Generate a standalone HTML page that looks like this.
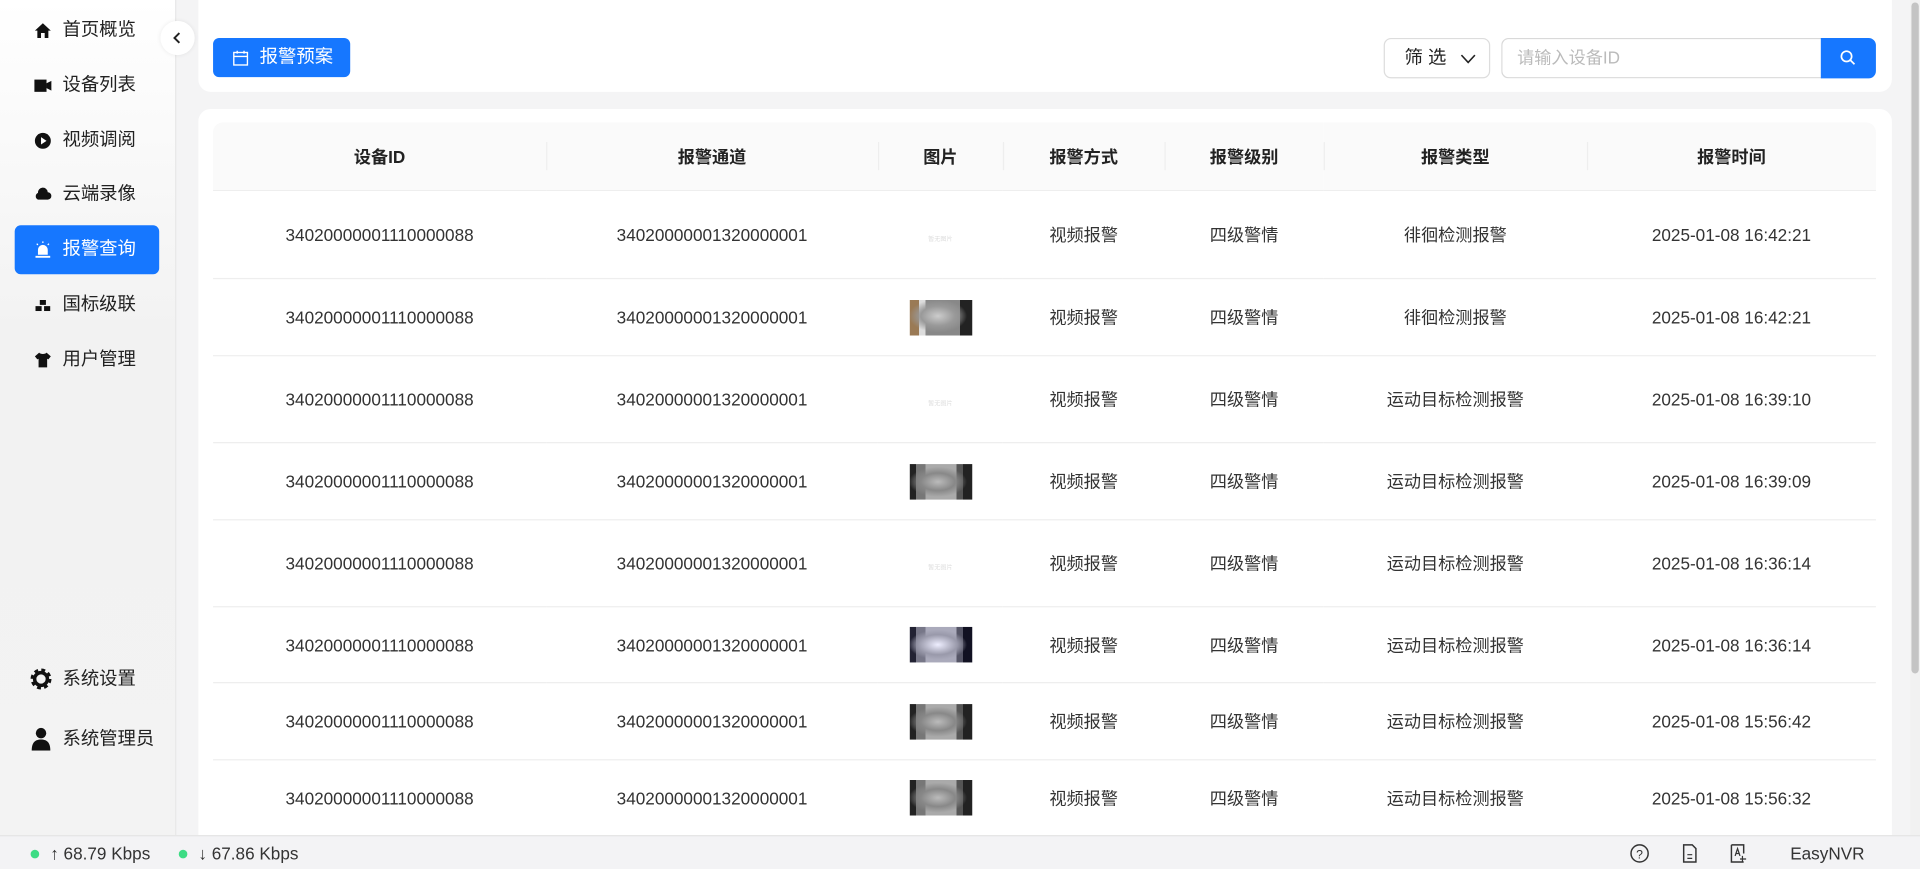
<!DOCTYPE html>
<html><head><meta charset="utf-8"><style>
html,body{margin:0;padding:0;width:1920px;height:869px;overflow:hidden;background:#f4f4f5;}
#w{position:absolute;left:0;top:0;width:1568px;height:710px;overflow:hidden;transform:scale(1.22449);transform-origin:0 0;font-family:"Liberation Sans","Noto Sans CJK SC",sans-serif;color:#222;background:#f4f4f5;}
.side{position:absolute;left:0;top:0;width:143px;height:682px;background:linear-gradient(#fff,#f2f2f2 40%,#f3f3f3);border-right:1px solid #e8e8e8;}
.mi{position:absolute;left:12px;width:118px;height:40px;font-size:15px;line-height:40px;}
.mi .ic{position:absolute;left:16px;top:13px;width:14px;height:14px;}
.mi span{position:absolute;left:39px;}
.act{background:#1677ff;color:#fff;border-radius:5px;}
.col{position:absolute;left:131px;top:17px;width:28px;height:28px;border-radius:50%;background:#fff;box-shadow:0 0 4px rgba(0,0,0,.08);}
.card{position:absolute;left:162px;width:1383px;background:#fff;border-radius:10px;}
.btn{position:absolute;left:174px;top:31px;width:112px;height:32px;background:#1677ff;border-radius:5px;color:#fff;font-size:15px;line-height:32px;}
.sel{position:absolute;left:1130px;top:31px;width:87px;height:33px;border:1px solid #ddd;border-radius:6px;box-sizing:border-box;font-size:15px;line-height:31px;}
.inp{position:absolute;left:1226px;top:31px;width:262px;height:33px;border:1px solid #d9d9d9;border-right:none;border-radius:6px 0 0 6px;box-sizing:border-box;color:#bbb;font-size:14px;line-height:31px;padding-left:12px;}
.sb{position:absolute;left:1487px;top:31px;width:45px;height:33px;background:#1677ff;border-radius:0 6px 6px 0;}
table{position:absolute;left:174px;top:100px;width:1358px;border-collapse:collapse;font-size:14px;}
th{height:55px;background:#fafafa;font-weight:bold;font-size:14px;position:relative;padding:0;border-bottom:1px solid #eee}
th+th:before{content:"";position:absolute;left:0;top:16px;height:23px;border-left:1px solid #eee;}
th:first-child{border-radius:8px 0 0 0}th:last-child{border-radius:0 8px 0 0}
td{text-align:center;border-bottom:1px solid #eee;padding:0;color:#333;}
.ph{font-size:5px;color:#ddd;}
.img{display:inline-block;width:51px;height:29px;vertical-align:middle;background:radial-gradient(ellipse at 45% 45%,#ccc 0,#999 35%,transparent 60%),linear-gradient(90deg,#9a7a55 0 15%,#ddd 15% 25%,#888 25% 80%,#222 80%);}
.img.d{background:radial-gradient(ellipse at 45% 50%,#bbb 0,#888 35%,transparent 60%),linear-gradient(90deg,#222 0 10%,#777 10% 25%,#aaa 25% 75%,#555 75% 85%,#222 85%);}
.img.b{background:radial-gradient(ellipse at 45% 50%,#eef 0,#99a 40%,transparent 60%),linear-gradient(90deg,#223 0 10%,#778 10% 25%,#aab 25% 75%,#556 75% 85%,#112 85%);}
.foot{position:absolute;left:0;top:682px;width:1568px;height:28px;background:#f3f3f5;border-top:1px solid #e4e4e4;font-size:14px;line-height:28px;color:#333;}
.dot{position:absolute;top:11px;width:7px;height:7px;border-radius:50%;background:#3ddc84;}
.scroll{position:absolute;left:1560px;top:0;width:8px;height:682px;background:#f1f1f1}
.scroll div{position:absolute;left:1px;top:2px;width:6px;height:548px;background:#c4c4c4;border-radius:3px}
</style></head><body><div id="w">
<div class="side">
 <div class="mi" style="top:5px"><svg class="ic" viewBox="0 0 14 14"><path d="M7 1L0.5 7H2.5V13H5.5V9H8.5V13H11.5V7H13.5Z" fill="#111"/></svg><span>首页概览</span></div>
 <div class="mi" style="top:50px"><svg class="ic" viewBox="0 0 14 14"><rect x="0" y="2" width="10" height="10" fill="#111"/><path d="M10 5L14 3V11L10 9Z" fill="#111"/></svg><span>设备列表</span></div>
 <div class="mi" style="top:95px"><svg class="ic" viewBox="0 0 14 14"><circle cx="7" cy="7" r="6.5" fill="#111"/><path d="M5.5 4L10 7 5.5 10Z" fill="#fff"/></svg><span>视频调阅</span></div>
 <div class="mi" style="top:139px"><svg class="ic" viewBox="0 0 14 14"><path d="M3 11A3 3 0 0 1 3 5.5 4 4 0 0 1 11 5 3 3 0 0 1 11 11Z" fill="#111"/></svg><span>云端录像</span></div>
 <div class="mi act" style="top:184px"><svg class="ic" viewBox="0 0 14 14"><path d="M3 11V7A4 4 0 0 1 11 7V11Z M1 12H13V13.5H1Z" fill="#fff"/><path d="M7 0V1.5M2 2L3 3M12 2L11 3" stroke="#fff"/></svg><span>报警查询</span></div>
 <div class="mi" style="top:229px"><svg class="ic" viewBox="0 0 14 14"><rect x="4.5" y="3" width="5" height="4" fill="#111"/><rect x="1" y="8" width="5" height="4" fill="#111"/><rect x="8" y="8" width="5" height="4" fill="#111"/></svg><span>国标级联</span></div>
 <div class="mi" style="top:274px"><svg class="ic" viewBox="0 0 14 14"><path d="M4 1L0.5 4 2.5 6.5 3.5 6V13H10.5V6L11.5 6.5 13.5 4 10 1 C9 2.5 5 2.5 4 1Z" fill="#111"/></svg><span>用户管理</span></div>
 <div class="mi" style="top:535px"><svg class="ic" viewBox="0 0 20 20" style="left:12px;top:10px;width:19px;height:19px"><circle cx="10" cy="10" r="7" fill="none" stroke="#111" stroke-width="4" stroke-dasharray="3 2.5"/><circle cx="10" cy="10" r="5.5" fill="none" stroke="#111" stroke-width="3"/></svg><span>系统设置</span></div>
 <div class="mi" style="top:584px"><svg class="ic" viewBox="0 0 20 20" style="left:12px;top:10px;width:19px;height:19px"><circle cx="10" cy="5" r="4.5" fill="#111"/><path d="M2 20C2 13 5 10.5 10 10.5S18 13 18 20Z" fill="#111"/></svg><span>系统管理员</span></div>
</div>
<div class="col"><svg viewBox="0 0 28 28" width="28" height="28"><path d="M15.5 10L11.5 14 15.5 18" stroke="#222" stroke-width="1.6" fill="none"/></svg></div>
<div class="card" style="top:-10px;height:85px"></div>
<div class="btn"><svg viewBox="0 0 14 14" width="13" height="13" style="position:absolute;left:16px;top:10px"><rect x="1" y="2" width="12" height="11" fill="none" stroke="#fff" stroke-width="1.2"/><path d="M1 5.5H13M4 0.5V3M10 0.5V3" stroke="#fff" stroke-width="1.2"/></svg><span style="position:absolute;left:38px">报警预案</span></div>
<div class="sel"><span style="position:absolute;left:16px">筛 选</span><svg viewBox="0 0 14 14" width="14" height="14" style="position:absolute;left:61px;top:9px"><path d="M1.5 4L7 10 12.5 4" stroke="#222" stroke-width="1.3" fill="none"/></svg></div>
<div class="inp">请输入设备ID</div>
<div class="sb"><svg viewBox="0 0 14 14" width="14" height="14" style="position:absolute;left:15px;top:9px"><circle cx="6" cy="6" r="4.2" fill="none" stroke="#fff" stroke-width="1.4"/><path d="M9 9L12.5 12.5" stroke="#fff" stroke-width="1.4"/></svg></div>
<div class="card" style="top:89px;height:640px"></div>
<table>
<colgroup><col style="width:272px"><col style="width:271px"><col style="width:102px"><col style="width:132px"><col style="width:130px"><col style="width:215px"><col style="width:236px"></colgroup>
<tr><th>设备ID</th><th>报警通道</th><th>图片</th><th>报警方式</th><th>报警级别</th><th>报警类型</th><th>报警时间</th></tr>
<tr style="height:72px"><td>34020000001110000088</td><td>34020000001320000001</td><td><span class="ph">暂无图片</span></td><td>视频报警</td><td>四级警情</td><td>徘徊检测报警</td><td>2025-01-08 16:42:21</td></tr>
<tr style="height:63px"><td>34020000001110000088</td><td>34020000001320000001</td><td><span class="img"></span></td><td>视频报警</td><td>四级警情</td><td>徘徊检测报警</td><td>2025-01-08 16:42:21</td></tr>
<tr style="height:71px"><td>34020000001110000088</td><td>34020000001320000001</td><td><span class="ph">暂无图片</span></td><td>视频报警</td><td>四级警情</td><td>运动目标检测报警</td><td>2025-01-08 16:39:10</td></tr>
<tr style="height:63px"><td>34020000001110000088</td><td>34020000001320000001</td><td><span class="img d"></span></td><td>视频报警</td><td>四级警情</td><td>运动目标检测报警</td><td>2025-01-08 16:39:09</td></tr>
<tr style="height:71px"><td>34020000001110000088</td><td>34020000001320000001</td><td><span class="ph">暂无图片</span></td><td>视频报警</td><td>四级警情</td><td>运动目标检测报警</td><td>2025-01-08 16:36:14</td></tr>
<tr style="height:62px"><td>34020000001110000088</td><td>34020000001320000001</td><td><span class="img b"></span></td><td>视频报警</td><td>四级警情</td><td>运动目标检测报警</td><td>2025-01-08 16:36:14</td></tr>
<tr style="height:63px"><td>34020000001110000088</td><td>34020000001320000001</td><td><span class="img d"></span></td><td>视频报警</td><td>四级警情</td><td>运动目标检测报警</td><td>2025-01-08 15:56:42</td></tr>
<tr style="height:62px"><td>34020000001110000088</td><td>34020000001320000001</td><td><span class="img d"></span></td><td>视频报警</td><td>四级警情</td><td>运动目标检测报警</td><td>2025-01-08 15:56:32</td></tr>
</table>
<div class="scroll"><div></div></div>
<div class="foot">
 <span class="dot" style="left:25px"></span><span style="position:absolute;left:41px">↑ 68.79 Kbps</span>
 <span class="dot" style="left:146px"></span><span style="position:absolute;left:162px">↓ 67.86 Kbps</span>
 <svg viewBox="0 0 16 16" width="16" height="16" style="position:absolute;left:1331px;top:6px"><circle cx="8" cy="8" r="7" fill="none" stroke="#333" stroke-width="1.2"/><text x="8" y="12" font-size="10" text-anchor="middle" fill="#333" font-family="Liberation Sans">?</text></svg>
 <svg viewBox="0 0 16 16" width="16" height="16" style="position:absolute;left:1372px;top:6px"><path d="M3 1H10L13 4V15H3Z" fill="none" stroke="#333" stroke-width="1.2"/><path d="M6 9H10M6 12H10" stroke="#333"/></svg>
 <svg viewBox="0 0 16 16" width="16" height="16" style="position:absolute;left:1412px;top:6px"><path d="M2 1H12V8M12 15H2V1" fill="none" stroke="#333" stroke-width="1.2"/><path d="M5 10L7 4 9 10M5.5 8H8.5M11 10V15M9 12.5H14" stroke="#333" fill="none"/></svg>
 <span style="position:absolute;left:1462px;font-size:14px">EasyNVR</span>
</div>
</div></body></html>
